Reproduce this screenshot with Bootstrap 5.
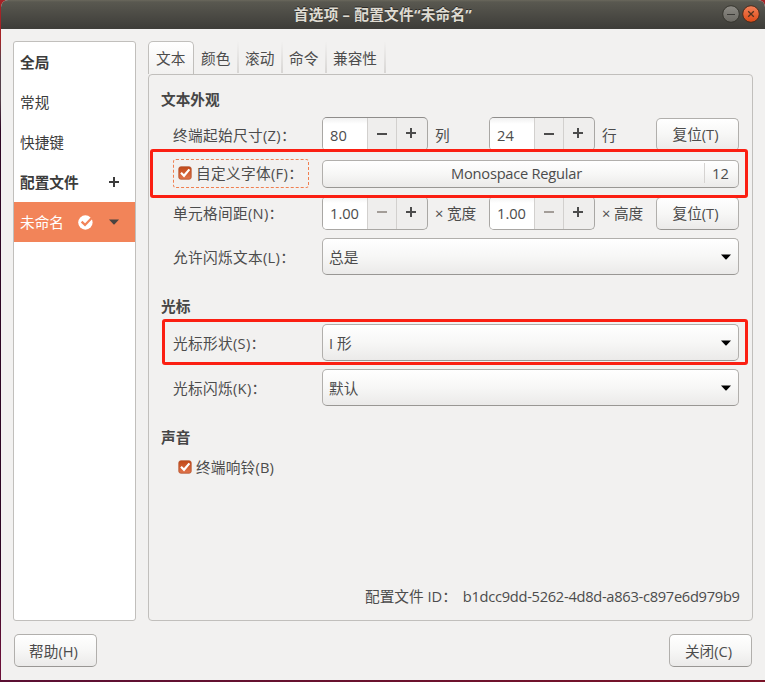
<!DOCTYPE html>
<html lang="zh-CN">
<head>
<meta charset="utf-8">
<title>首选项 – 配置文件“未命名”</title>
<link rel="stylesheet" href="https://cdn.jsdelivr.net/npm/bootstrap@5.3.0/dist/css/bootstrap.min.css">
<style>
body{width:765px;height:682px;overflow:hidden;background:linear-gradient(90deg,#5a0f33,#7a1428);font:14.67px/20px "Open Sans","Noto Sans CJK SC",sans-serif;color:#4c4c4c;font-kerning:normal}
.frame{width:764px;height:680px;margin-left:1px;background:#f2f1f0;border-radius:7px 7px 0 0}
.desk{background:linear-gradient(#a52326 0 40px,#55404a 60px 100px,#2e0624 130px 560px,#6a0f38 660px);width:765px;height:680px}
.titlebar{height:29px;background:linear-gradient(#6a675c 0,#595850 2px,#3e3d39 28px);border-radius:7px 7px 0 0;color:#dfdbd2;font-weight:700;padding:0 0 2px 0;letter-spacing:.25px;text-shadow:0 -1px #2b2a27}
.winbtns{gap:2px;right:5px;top:5px}
.main{height:592px;padding:12px 12px 0;gap:12px}
.side{width:123px;background:#fff;border:1px solid #c1bfbc;border-radius:3px;color:#3c3c3c}
.side-item{height:40px;padding:0 6px}
.side-item.current{background:#f28459;color:#fff}
.side-icon{margin-right:9px}
.side-arrow{margin:0 10px 0 16px;color:#4a4340}
.tabs{height:33px}
.tab-item{width:44px;padding:0 0 0 7px;position:relative}
.tab-item:not(.on)::after{content:"";position:absolute;right:-1px;top:0;bottom:1px;width:2px;background:linear-gradient(transparent,#d8d6d4)}
.tab-item.on{width:46px;border:1px solid #c1bfbc;border-bottom:0;border-radius:5px 5px 0 0;background:linear-gradient(#fff,#f2f1f0)}
.tab-item.wide{width:59px}
.pane{width:605px;height:547px;border:1px solid #c1bfbc;border-radius:4px;padding:12px 13px 14px 12px}
.sect{height:26px;line-height:24px;font-weight:700;margin-bottom:4px;color:#464646}
.sect.next{margin-top:19px}
.line{margin:0 0 8px 12px;height:37px;position:relative}
.line.spins{height:34px}
.line.font-line{height:29px}
.cap{width:149px;letter-spacing:.33px}
.drop{padding-top:2px}
.ctl{border:1px solid #b1afac;border-bottom-color:#999794;border-radius:5px;background:linear-gradient(#fff,#f7f7f6 50%,#ebeae9);color:#4c4c4c}
.combo{width:417px;height:37px;padding:0 7px 0 6px}
.push{width:83px;height:33px;font-size:14.67px}
.spin{width:106px;height:34px;border:1px solid #a9a7a4;border-top-color:#8f8d8b;border-radius:5px;background:#efeeed;overflow:hidden}
.spin-num{width:44px;padding-left:7px;background:linear-gradient(#f1f1f1,#fff 6px)}
.spin-step{width:29px;border-left:1px solid #d2d0ce}
.spin-step svg{margin:-2px 1px 0 0}
.drop .spin-step svg,.spins:first-of-type .spin-step svg{margin-top:0}
.spin-step.off{color:#a39d98}
.spin-step.last{width:31px;padding-right:1px}
.unit{width:61px;padding-left:7px;white-space:nowrap;letter-spacing:-.1px}
.focus{width:136px;height:29px;border:1px dashed #f07f50;border-radius:3px;padding:0 0 2px 4px;letter-spacing:.33px;white-space:nowrap}
.fontbtn{width:417px;height:28px;padding-bottom:1px}
.font-name{letter-spacing:-.25px;padding-left:6px}
.fontbtn .size{width:34px;border-left:1px solid #d5d3d1;height:20px;padding-right:2px}
.marked::after{content:"";position:absolute;border:3px solid #fb1f12;border-radius:3px;pointer-events:none;z-index:2}
.mark-a::after{left:-23px;top:-10px;width:598px;height:49px}
.mark-b::after{left:-11px;top:-5px;width:586px;height:46px}
.bell{margin-top:-3px;padding-left:5px;letter-spacing:.2px}
.ident{padding-left:204px;white-space:nowrap}
.uuid{margin-left:6px;letter-spacing:-.29px}
.foot{padding:13px 13px 0}
</style>
</head>
<body>
<svg width="0" height="0" class="position-absolute"><defs>
<linearGradient id="gr" x2="0" y2="1"><stop stop-color="#8d8b85"/><stop offset="1" stop-color="#6b6963"/></linearGradient>
<linearGradient id="og" x2="0" y2="1"><stop stop-color="#f4825a"/><stop offset="1" stop-color="#df4a16"/></linearGradient>
<linearGradient id="ck" x2="0" y2="1"><stop stop-color="#c04818"/><stop offset="1" stop-color="#e2754c"/></linearGradient>
<symbol id="minus" viewBox="0 0 12 12"><path d="M1 6h10" stroke="currentColor" stroke-width="2"/></symbol>
<symbol id="plus" viewBox="0 0 12 12"><path d="M1 6h10M6 1v10" stroke="currentColor" stroke-width="2"/></symbol>
<symbol id="down" viewBox="0 0 10 6"><path d="M0 .5h10L5.6 5.2q-.6.5-1.2 0z" fill="currentColor"/></symbol>
<symbol id="check" viewBox="0 0 14 14"><rect x=".8" y=".8" width="12.4" height="12.4" rx="2" fill="url(#ck)" stroke="#b4502b" stroke-width=".8"/><path d="M3 6.8l3 3L11.4 3.4" fill="none" stroke="#fff" stroke-width="2.2"/></symbol>
</defs></svg>
<div class="desk"><div class="frame">
<header class="titlebar d-flex align-items-center justify-content-center position-relative">
<span>首选项 – 配置文件“未命名”</span>
<div class="winbtns d-flex position-absolute">
<svg width="18" height="18"><circle cx="9" cy="9" r="8.3" fill="url(#gr)" stroke="#37362f"/><path d="M5 9.5h8" stroke="#3b3a36"/></svg>
<svg width="18" height="18"><circle cx="9" cy="9" r="8.3" fill="url(#og)" stroke="#4a2c1d"/><path d="M6.2 6.2l5.6 5.6m0-5.6l-5.6 5.6" stroke="#52331f" stroke-width="1.3"/></svg>
</div>
</header>
<main class="main d-flex">
<nav class="side">
<div class="side-item d-flex align-items-center fw-bold">全局</div>
<div class="side-item d-flex align-items-center">常规</div>
<div class="side-item d-flex align-items-center">快捷键</div>
<div class="side-item d-flex align-items-center fw-bold">配置文件<svg class="ms-auto side-icon" width="12" height="12"><use href="#plus"/></svg></div>
<div class="side-item current d-flex align-items-center">未命名
<svg class="ms-auto" width="15" height="15" viewBox="0 0 15 15"><circle cx="7.4" cy="7.5" r="7.2" fill="#fff"/><path d="M3.6 6.6l3.4 3.3L14.6 2" fill="none" stroke="#f28459" stroke-width="2.2"/></svg>
<svg width="10" height="6" class="side-arrow"><use href="#down"/></svg></div>
</nav>
<section>
<nav class="tabs d-flex">
<div class="tab-item on d-flex align-items-center">文本</div>
<div class="tab-item d-flex align-items-center">颜色</div>
<div class="tab-item d-flex align-items-center">滚动</div>
<div class="tab-item d-flex align-items-center">命令</div>
<div class="tab-item wide d-flex align-items-center">兼容性</div>
</nav>
<div class="pane d-flex flex-column">
<div class="sect">文本外观</div>
<div class="line spins d-flex align-items-center">
<span class="cap drop">终端起始尺寸(Z)：</span>
<div class="spin d-flex"><span class="spin-num drop d-flex align-items-center">80</span><span class="spin-step drop d-flex align-items-center justify-content-center"><svg width="12" height="12"><use href="#minus"/></svg></span><span class="spin-step last d-flex align-items-center justify-content-center"><svg width="12" height="12"><use href="#plus"/></svg></span></div>
<span class="unit drop">列</span>
<div class="spin d-flex"><span class="spin-num drop d-flex align-items-center">24</span><span class="spin-step drop d-flex align-items-center justify-content-center"><svg width="12" height="12"><use href="#minus"/></svg></span><span class="spin-step last d-flex align-items-center justify-content-center"><svg width="12" height="12"><use href="#plus"/></svg></span></div>
<span class="unit drop">行</span>
<button class="btn ctl push p-0 pe-1">复位(T)</button>
</div>
<div class="line font-line marked mark-a d-flex align-items-center">
<div class="focus d-flex align-items-center"><svg width="14" height="14" class="me-1"><use href="#check"/></svg>自定义字体(F)：</div>
<div class="ctl fontbtn d-flex align-items-center ms-auto"><span class="flex-fill text-center font-name">Monospace Regular</span><span class="size text-center">12</span></div>
</div>
<div class="line spins d-flex align-items-center">
<span class="cap">单元格间距(N)：</span>
<div class="spin d-flex"><span class="spin-num d-flex align-items-center">1.00</span><span class="spin-step off d-flex align-items-center justify-content-center"><svg width="12" height="12"><use href="#minus"/></svg></span><span class="spin-step last d-flex align-items-center justify-content-center"><svg width="12" height="12"><use href="#plus"/></svg></span></div>
<span class="unit">× 宽度</span>
<div class="spin d-flex"><span class="spin-num d-flex align-items-center">1.00</span><span class="spin-step off d-flex align-items-center justify-content-center"><svg width="12" height="12"><use href="#minus"/></svg></span><span class="spin-step last d-flex align-items-center justify-content-center"><svg width="12" height="12"><use href="#plus"/></svg></span></div>
<span class="unit">× 高度</span>
<button class="btn ctl push p-0 pe-1">复位(T)</button>
</div>
<div class="line d-flex align-items-center mb-0"><span class="cap">允许闪烁文本(L)：</span><div class="ctl combo d-flex align-items-center justify-content-between">总是<svg width="10" height="6" class="text-black"><use href="#down"/></svg></div></div>
<div class="sect next">光标</div>
<div class="line marked mark-b d-flex align-items-center"><span class="cap">光标形状(S)：</span><div class="ctl combo d-flex align-items-center justify-content-between">I 形<svg width="10" height="6" class="text-black"><use href="#down"/></svg></div></div>
<div class="line d-flex align-items-center mb-0"><span class="cap">光标闪烁(K)：</span><div class="ctl combo d-flex align-items-center justify-content-between">默认<svg width="10" height="6" class="text-black"><use href="#down"/></svg></div></div>
<div class="sect next">声音</div>
<div class="line font-line bell d-flex align-items-center"><svg width="14" height="14" class="me-1"><use href="#check"/></svg>终端响铃(B)</div>
<div class="ident d-flex mt-auto"><span>配置文件 ID：</span><span class="uuid">b1dcc9dd-5262-4d8d-a863-c897e6d979b9</span></div>
</div>
</section>
</main>
<footer class="foot d-flex justify-content-between">
<button class="btn ctl push p-0 pe-1">帮助(H)</button><button class="btn ctl push p-0 pe-1">关闭(C)</button>
</footer>
</div></div>
<script src="https://cdn.jsdelivr.net/npm/bootstrap@5.3.0/dist/js/bootstrap.bundle.min.js"></script>
</body>
</html>
